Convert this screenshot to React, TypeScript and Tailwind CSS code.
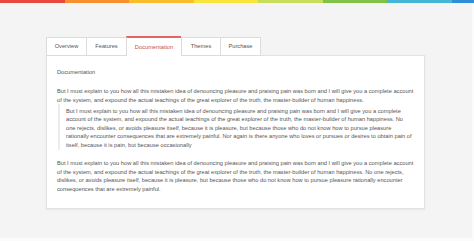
import React from 'react';

const stripe = ['#e8493f', '#f7902e', '#fbbd2c', '#f9e43a', '#c6de5b', '#80c245', '#46b6d6', '#2f8fd6'];

const tabs = ['Overview', 'Features', 'Documentation', 'Themes', 'Purchase'];
const tabWidths = ['w-[40px]', 'w-[40px]', 'w-[55px]', 'w-[39px]', 'w-[41px]'];

const P1 =
  'But I must explain to you how all this mistaken idea of denouncing pleasure and praising pain was born and I will give you a complete account of the system, and expound the actual teachings of the great explorer of the truth, the master-builder of human happiness.';
const QUOTE =
  'But I must explain to you how all this mistaken idea of denouncing pleasure and praising pain was born and I will give you a complete account of the system, and expound the actual teachings of the great explorer of the truth, the master-builder of human happiness. No one rejects, dislikes, or avoids pleasure itself, because it is pleasure, but because those who do not know how to pursue pleasure rationally encounter consequences that are extremely painful. Nor again is there anyone who loves or pursues or desires to obtain pain of itself, because it is pain, but because occasionally';
const P3 =
  'But I must explain to you how all this mistaken idea of denouncing pleasure and praising pain was born and I will give you a complete account of the system, and expound the actual teachings of the great explorer of the truth, the master-builder of human happiness. No one rejects, dislikes, or avoids pleasure itself, because it is pleasure, but because those who do not know how to pursue pleasure rationally encounter consequences that are extremely painful.';

export default function App() {
  return (
    <div className="w-[474px] h-[241px] bg-[#fbfbfb] overflow-hidden font-['Liberation_Sans',Arial,sans-serif] text-[#555]">
      <div className="w-[472px] h-[238px] bg-[#f4f4f4]">
        {/* rainbow strip */}
        <div className="flex h-[3px] w-[474px]">
          {stripe.map((c) => (
            <div key={c} className="w-[64.5px] shrink-0 h-full" style={{ background: c }} />
          ))}
        </div>

        <div className="pl-[46px] pt-[34px]">
          {/* tabs */}
          <div className="flex h-[19px] relative z-10">
            {tabs.map((t, i) => {
              const active = i === 2;
              return (
                <div
                  key={t}
                  className={`${tabWidths[i]} flex items-center justify-center text-[5.7px] border-l border-[#dcdcdc] ${
                    i === tabs.length - 1 ? 'border-r' : ''
                  } ${
                    active
                      ? 'bg-white border-t-2 border-t-[#e06666] text-[#c9504a] h-[20px] -mt-px'
                      : 'bg-white border-t border-b text-[#555]'
                  }`}
                >
                  {t}
                </div>
              );
            })}
          </div>

          {/* panel */}
          <div className="w-[379px] -mt-px bg-white border border-[#e2e2e2] shadow-[0_1px_2px_rgba(0,0,0,0.06)] pl-[10px] pr-[9px] pt-[12px] pb-[15px] text-[5.7px] leading-[8.5px]">
            <div className="mb-[10.5px]">Documentation</div>
            <p>{P1}</p>
            <blockquote className="border-l-2 border-l-[#ececec] ml-px pl-[6px] pr-[3px] pt-[2.5px] pb-px mb-[9px]">
              {QUOTE}
            </blockquote>
            <p>{P3}</p>
          </div>
        </div>
      </div>
    </div>
  );
}
